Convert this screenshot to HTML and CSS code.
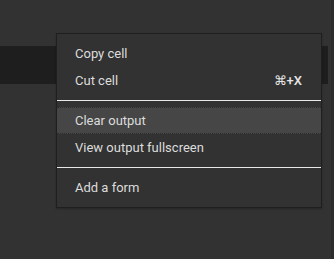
FILE: index.html
```html
<!DOCTYPE html>
<html>
<head>
<meta charset="utf-8">
<link rel="stylesheet" href="styles.css">
</head>
<body>
<div class="page">
  <div class="main">
    <div class="topspace"></div>
    <div class="cell"></div>
  </div>
  <div class="scrollbar"></div>
</div>
<div class="menu">
  <div class="group">
    <div class="item"><span>Copy cell</span></div>
    <div class="item"><span>Cut cell</span><span class="shortcut">⌘+X</span></div>
  </div>
  <div class="sep"></div>
  <div class="group">
    <div class="item active"><span>Clear output</span></div>
    <div class="item"><span>View output fullscreen</span></div>
  </div>
  <div class="sep"></div>
  <div class="group">
    <div class="item"><span>Add a form</span></div>
  </div>
</div>
</body>
</html>
```
FILE: styles.css
```css
html, body {
  margin: 0;
  padding: 0;
  width: 334px;
  height: 259px;
  overflow: hidden;
  background: #323232;
  font-family: Roboto, "Liberation Sans", sans-serif;
}
.page {
  display: flex;
  height: 259px;
}
.main {
  flex: 1;
  display: flex;
  flex-direction: column;
}
.topspace {
  height: 46px;
}
.cell {
  height: 38px;
  background: #1e1e1e;
  margin-right: 3px;
}
.scrollbar {
  width: 3px;
  background: #2c2c2c;
}
.menu {
  position: absolute;
  left: 56px;
  top: 33px;
  width: 264px;
  background: #323232;
  border: 1px solid #1f1f1f;
  box-shadow: 0 1px 2px rgba(0,0,0,0.25);
  color: #dcdcdc;
  font-size: 13px;
}
.group {
  padding: 6px 0;
}
.item {
  height: 27px;
  display: flex;
  align-items: center;
  justify-content: space-between;
  padding: 0 19px 0 18px;
  box-sizing: border-box;
}
.item.active {
  background: #464646;
  border-top: 1px dotted #2c2c2c;
  border-bottom: 1px dotted #2c2c2c;
}
.shortcut {
  font-size: 13px;
  font-weight: 500;
  color: #e6e6e6;
}
.sep {
  height: 1px;
  background: #e8e8e8;
}
```
